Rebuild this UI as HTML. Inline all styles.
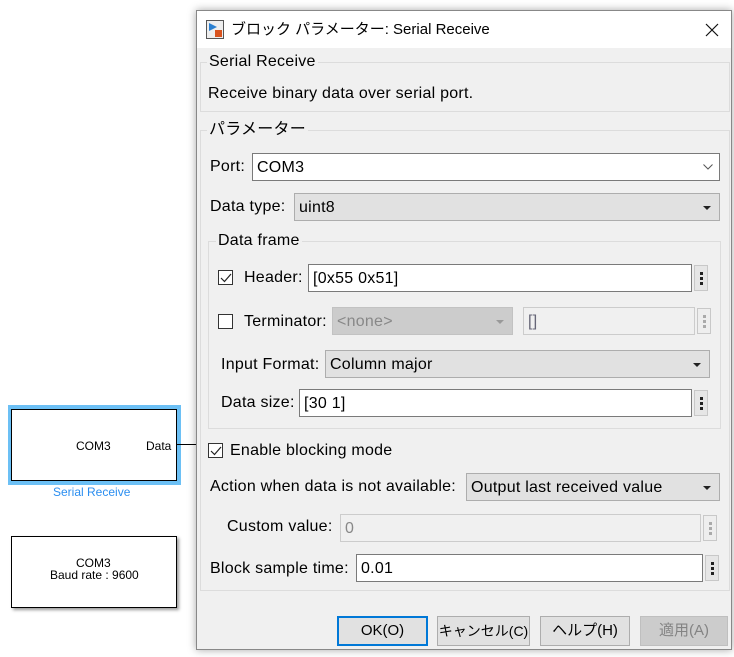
<!DOCTYPE html>
<html><head><meta charset="utf-8"><style>
*{box-sizing:border-box;margin:0;padding:0}
body{width:734px;height:657px;background:#fff;position:relative;overflow:hidden;font-family:"Liberation Sans","Noto Sans CJK JP",sans-serif;font-size:16px;letter-spacing:.25px;color:#000}
.a{position:absolute}
.t{position:absolute;white-space:nowrap;line-height:18px}
.in{position:absolute;background:#fff;border:1px solid #7a7a7a;padding-left:4px;line-height:27px;white-space:nowrap}
.sel{position:absolute;background:#e1e1e1;border:1px solid #adadad;padding-left:4px;line-height:27px;white-space:nowrap}
.grp{position:absolute;border:1px solid #dcdcdc}
.lg{position:absolute;background:#f0f0f0;padding:0 2px;line-height:18px;white-space:nowrap}
.dots{position:absolute;width:14px;background:#e6e6e6;border:1px solid #c8c8c8}
.dots i{position:absolute;left:5px;width:3px;height:3px;background:#222}
.cb{position:absolute;width:15px;height:15px;border:1px solid #333;background:#fff}
.btn{position:absolute;height:30px;border:1px solid #adadad;background:#e1e1e1;text-align:center;line-height:28px;white-space:nowrap;font-size:15px;letter-spacing:0}
.arr{position:absolute;right:8px;top:12px;width:0;height:0;border-left:4px solid transparent;border-right:4px solid transparent;border-top:4px solid #222}
</style></head><body>
<div class="a" style="left:8px;top:405px;width:173px;height:80px;background:#6cc0f5"></div>
<div class="a" style="left:11px;top:409px;width:166px;height:72px;background:#fff;border:1px solid #000"></div>
<div class="t" style="left:76px;top:437px;font-size:12px;letter-spacing:0">COM3</div>
<div class="t" style="left:146px;top:437px;font-size:12px;letter-spacing:0">Data</div>
<div class="a" style="left:177px;top:444px;width:20px;height:1px;background:#000"></div>
<div class="t" style="left:53px;top:483px;font-size:12px;letter-spacing:0;color:#2b8ef0">Serial Receive</div>
<div class="a" style="left:11px;top:536px;width:166px;height:72px;background:#fff;border:1px solid #000;box-shadow:2px 2px 3px #999"></div>
<div class="t" style="left:76px;top:557px;font-size:12px;letter-spacing:0;line-height:12px">COM3</div>
<div class="t" style="left:50px;top:569px;font-size:12px;letter-spacing:0;line-height:12px">Baud rate : 9600</div>

<div class="a" style="left:196px;top:10px;width:536px;height:640px;background:#f0f0f0;border:1px solid #888;box-shadow:0 0 8px rgba(0,0,0,.35)"></div>
<div class="a" style="left:197px;top:11px;width:534px;height:37px;background:#fff"></div>
<svg class="a" style="left:206px;top:20px" width="18" height="19"><rect x="0.5" y="0.5" width="17" height="18" fill="#eee" stroke="#555"/><path d="M3 3 L11 7 L3 11Z" fill="#2a7fd0"/><rect x="9" y="10" width="7" height="7" fill="#d9531e"/></svg>
<div class="t" style="left:231px;top:21px;font-size:15px;letter-spacing:0">ブロック パラメーター: Serial Receive</div>
<svg class="a" style="left:705px;top:23px" width="14" height="14"><path d="M1 1L13 13M13 1L1 13" stroke="#111" stroke-width="1.2"/></svg>

<div class="grp" style="left:200px;top:62px;width:530px;height:50px"></div>
<div class="lg" style="left:207px;top:53px">Serial Receive</div>
<div class="t" style="left:208px;top:85px">Receive binary data over serial port.</div>

<div class="grp" style="left:200px;top:130px;width:530px;height:461px"></div>
<div class="lg" style="left:207px;top:121px">パラメーター</div>

<div class="t" style="left:210px;top:158px">Port:</div>
<div class="in" style="left:252px;top:153px;width:468px;height:28px">COM3<svg class="a" style="right:6px;top:10px" width="10" height="6"><path d="M0.5 0.5L5 5L9.5 0.5" stroke="#555" fill="none"/></svg></div>

<div class="t" style="left:210px;top:198px">Data type:</div>
<div class="sel" style="left:294px;top:193px;width:426px;height:28px">uint8<span class="arr"></span></div>

<div class="grp" style="left:208px;top:241px;width:513px;height:188px"></div>
<div class="lg" style="left:216px;top:232px">Data frame</div>

<div class="cb" style="left:218px;top:270px"><svg class="a" style="left:1px;top:2px" width="12" height="10"><path d="M1 5L4.5 8.5L11 1" stroke="#222" fill="none" stroke-width="1.2"/></svg></div>
<div class="t" style="left:244px;top:269px">Header:</div>
<div class="in" style="left:308px;top:264px;width:384px;height:28px">[0x55 0x51]</div>
<div class="dots" style="left:694px;top:265px;height:26px"><i style="top:6px"></i><i style="top:11px"></i><i style="top:16px"></i></div>

<div class="cb" style="left:218px;top:314px"></div>
<div class="t" style="left:244px;top:313px">Terminator:</div>
<div class="sel" style="left:332px;top:307px;width:181px;height:28px;background:#cccccc;border-color:#c2c2c2;color:#888">&lt;none&gt;<span class="arr" style="border-top-color:#999"></span></div>
<div class="in" style="left:523px;top:307px;width:172px;height:28px;background:#f0f0f0;border-color:#ccc;color:#667">[]</div>
<div class="dots" style="left:697px;top:308px;height:26px;background:#eee"><i style="top:6px;background:#aaa"></i><i style="top:11px;background:#aaa"></i><i style="top:16px;background:#aaa"></i></div>

<div class="t" style="left:221px;top:356px">Input Format:</div>
<div class="sel" style="left:325px;top:350px;width:385px;height:28px">Column major<span class="arr"></span></div>

<div class="t" style="left:221px;top:394px">Data size:</div>
<div class="in" style="left:299px;top:389px;width:393px;height:28px">[30 1]</div>
<div class="dots" style="left:694px;top:390px;height:26px"><i style="top:6px"></i><i style="top:11px"></i><i style="top:16px"></i></div>

<div class="cb" style="left:208px;top:443px"><svg class="a" style="left:1px;top:2px" width="12" height="10"><path d="M1 5L4.5 8.5L11 1" stroke="#222" fill="none" stroke-width="1.2"/></svg></div>
<div class="t" style="left:230px;top:442px">Enable blocking mode</div>

<div class="t" style="left:210px;top:478px">Action when data is not available:</div>
<div class="sel" style="left:466px;top:473px;width:254px;height:28px">Output last received value<span class="arr"></span></div>

<div class="t" style="left:227px;top:518px">Custom value:</div>
<div class="in" style="left:340px;top:514px;width:361px;height:28px;background:#f0f0f0;border-color:#ccc;color:#888">0</div>
<div class="dots" style="left:703px;top:515px;height:26px;background:#eee"><i style="top:6px;background:#aaa"></i><i style="top:11px;background:#aaa"></i><i style="top:16px;background:#aaa"></i></div>

<div class="t" style="left:210px;top:560px">Block sample time:</div>
<div class="in" style="left:356px;top:554px;width:347px;height:28px">0.01</div>
<div class="dots" style="left:705px;top:555px;height:26px"><i style="top:6px"></i><i style="top:11px"></i><i style="top:16px"></i></div>

<div class="btn" style="left:337px;top:616px;width:91px;border:2px solid #0078d7;line-height:26px">OK(O)</div>
<div class="btn" style="left:437px;top:616px;width:93px;font-size:14px">キャンセル(C)</div>
<div class="btn" style="left:540px;top:616px;width:90px">ヘルプ(H)</div>
<div class="btn" style="left:640px;top:616px;width:88px;background:#cccccc;border-color:#bfbfbf;color:#838383">適用(A)</div>
</body></html>
